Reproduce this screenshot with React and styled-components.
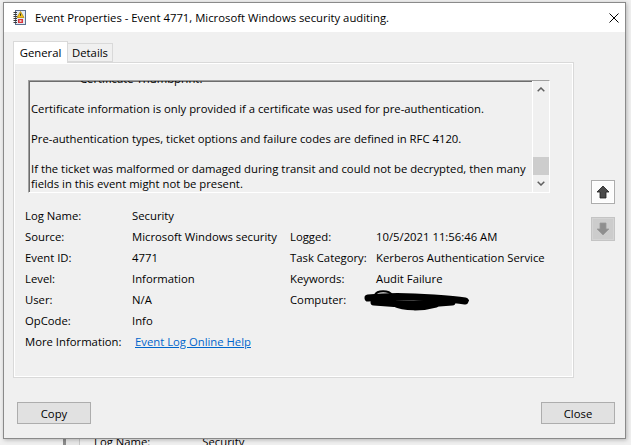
import React from 'react';
import styled, { createGlobalStyle } from 'styled-components';

const GlobalStyle = createGlobalStyle`
  html, body { margin: 0; padding: 0; }
  body {
    background: #f0f0f0;
    font-family: "Open Sans", "Noto Sans", sans-serif;
    font-size: 11.3px;
    color: #000;
    overflow: hidden;
  }
`;

const Desktop = styled.div`
  width: 631px;
  height: 445px;
  display: flex;
  flex-direction: column;
  overflow: hidden;
  background: #f0f0f0;
`;

const DialogRow = styled.div`
  display: flex;
  padding: 2px 0 0 3px;
`;

const Dialog = styled.div`
  width: 623px;
  height: 437px;
  box-sizing: border-box;
  border: 1px solid #8a8a8a;
  background: #f0f0f0;
  display: flex;
  flex-direction: column;
  box-shadow: 1px 1px 4px rgba(0, 0, 0, 0.25);
  position: relative;
  z-index: 1;
`;

const TitleBar = styled.div`
  height: 29px;
  flex: none;
  background: #fff;
  display: flex;
  align-items: center;
  padding: 0 6px 0 9px;
`;

const TitleText = styled.div`
  margin-left: 9px;
  flex: 1;
  white-space: nowrap;
`;

const Body = styled.div`
  flex: 1;
  display: flex;
  flex-direction: column;
  padding: 9px 10px 0 9px;
`;

const MainRow = styled.div`
  display: flex;
`;

const TabArea = styled.div`
  width: 561px;
  display: flex;
  flex-direction: column;
`;

const TabRow = styled.div`
  height: 21px;
  display: flex;
  align-items: flex-end;
`;

const Tab = styled.div`
  box-sizing: border-box;
  width: ${p => p.$width}px;
  height: ${p => (p.$active ? 22 : 19)}px;
  margin-bottom: ${p => (p.$active ? -1 : 0)}px;
  border: 1px solid #d9d9d9;
  border-bottom: ${p => (p.$active ? 'none' : '1px solid #d9d9d9')};
  border-left: ${p => (p.$first ? '1px solid #d9d9d9' : 'none')};
  background: ${p => (p.$active ? '#fff' : '#f0f0f0')};
  display: flex;
  align-items: center;
  justify-content: center;
  position: relative;
  z-index: ${p => (p.$active ? 2 : 1)};
  white-space: nowrap;
`;

const Panel = styled.div`
  box-sizing: border-box;
  height: 316px;
  border: 1px solid #d9d9d9;
  box-shadow: inset 0 0 0 1px #fff;
  padding: 17px 11px 0 11px;
  display: flex;
  flex-direction: column;
`;

const TextBox = styled.div`
  box-sizing: border-box;
  width: 522px;
  height: 113px;
  margin-left: 3px;
  border: 1px solid;
  border-color: #a0a0a0 #fff #fff #a0a0a0;
  box-shadow: inset 1px 1px 0 #6d6d6d;
  display: flex;
`;

const TextContent = styled.div`
  flex: 1;
  overflow: hidden;
  padding-left: 2px;
  line-height: 15px;
`;

const TextScroll = styled.div`
  margin-top: -10px;
`;

const Line = styled.div`
  height: 15px;
  white-space: nowrap;
  padding-left: ${p => p.$indent || 0}px;
`;

const ScrollBar = styled.div`
  width: 17px;
  box-sizing: border-box;
  border-left: 1px solid #fff;
  background: #f0f0f0;
  display: flex;
  flex-direction: column;
`;

const ScrollArrow = styled.div`
  height: 17px;
  display: flex;
  align-items: center;
  justify-content: center;
`;

const ScrollTrack = styled.div`
  flex: 1;
  display: flex;
  flex-direction: column;
  justify-content: flex-end;
`;

const Thumb = styled.div`
  height: 18px;
  background: #cdcdcd;
`;

const Details = styled.div`
  margin-top: 12px;
  display: grid;
  grid-template-columns: 107px 158px 86px auto;
  grid-auto-rows: 21px;
  align-items: center;
  white-space: nowrap;
`;

const Cell = styled.div`
  line-height: 21px;
`;

const HelpLink = styled.a`
  color: #0066cc;
  text-decoration: underline;
  padding-left: 3px;
  cursor: pointer;
`;

const Redacted = styled.svg`
  display: block;
  margin: -1px 0 0 -12px;
`;

const ArrowCol = styled.div`
  margin-left: 17px;
  padding-top: 139px;
  display: flex;
  flex-direction: column;
  gap: 13px;
`;

const MoveBtn = styled.div`
  box-sizing: border-box;
  width: 24px;
  height: 24px;
  border: 1px solid ${p => (p.$disabled ? '#c4c4c4' : '#adadad')};
  background: ${p => (p.$disabled ? '#cccccc' : '#fcfcfc')};
  box-shadow: inset 0 0 0 1px ${p => (p.$disabled ? '#d4d4d4' : '#fff')};
  display: flex;
  align-items: center;
  justify-content: center;
`;

const Footer = styled.div`
  margin-top: 24px;
  padding-left: 4px;
  display: flex;
  justify-content: space-between;
`;

const Button = styled.button`
  width: 74px;
  height: 22px;
  box-sizing: border-box;
  border: 1px solid #adadad;
  background: #e1e1e1;
  font: inherit;
  color: #000;
  padding: 0;
`;

const BehindStrip = styled.div`
  flex: 1;
  display: flex;
  overflow: hidden;
  background: #f0f0f0;
`;

const BehindBar = styled.div`
  margin-left: 63px;
  width: 13px;
  border-left: 3px solid #8c8c8c;
  border-right: 1px solid #c8c8c8;
  background: #e8e8e8;
`;

const BehindText = styled.div`
  margin-left: ${p => p.$gap}px;
  margin-top: -5px;
  line-height: 15px;
  white-space: nowrap;
`;

const EventIcon = () => (
  <svg width="13" height="15" viewBox="0 0 13 15">
    <rect x="2.5" y="0.5" width="10" height="14" fill="#e4eaf2" stroke="#5b6f8f" />
    {[2, 4, 6, 8, 10, 12].map(y => (
      <line key={y} x1="0.5" y1={y + 0.5} x2="4" y2={y + 0.5} stroke="#3a3a3a" />
    ))}
    <polygon points="7.5,1.5 11,7.5 4,7.5" fill="#f6c31a" stroke="#a88400" strokeWidth="0.7" />
    <line x1="7.5" y1="3.5" x2="7.5" y2="5.8" stroke="#222" strokeWidth="0.9" />
    <rect x="5" y="9" width="5" height="4" fill="#d8343b" />
    <rect x="6.5" y="10" width="2" height="2" fill="#f4c0c0" />
  </svg>
);

const CloseIcon = () => (
  <svg width="10" height="10" viewBox="0 0 10 10">
    <path d="M0.5 0.5 L9.5 9.5 M9.5 0.5 L0.5 9.5" stroke="#000" strokeWidth="1" />
  </svg>
);

const Chevron = ({ down }) => (
  <svg width="8" height="5" viewBox="0 0 8 5">
    <path d={down ? 'M0.7 0.7 L4 4 L7.3 0.7' : 'M0.7 4.3 L4 1 L7.3 4.3'} stroke="#606060" strokeWidth="1.5" fill="none" />
  </svg>
);

const BlockArrow = ({ down, disabled }) => (
  <svg width="14" height="14" viewBox="0 0 14 14">
    <path
      d={down ? 'M7 13 L13 7 H10 V1 H4 V7 H1 Z' : 'M7 1 L13 7 H10 V13 H4 V7 H1 Z'}
      fill={disabled ? '#8e8e8e' : '#4a4a4a'}
      stroke={disabled ? '#9a9a9a' : '#1e1e1e'}
      strokeWidth="0.8"
      strokeLinejoin="round"
    />
  </svg>
);

const Scribble = () => (
  <Redacted width="106" height="23" viewBox="0 0 106 23">
    <path d="M4 10 C 20 8, 45 8, 70 10 C 85 11, 95 12, 101 13" stroke="#000" strokeWidth="7" fill="none" strokeLinecap="round" />
    <path d="M10 14 C 30 16, 60 17, 88 14" stroke="#000" strokeWidth="7" fill="none" strokeLinecap="round" />
    <path d="M11 7 C 13 2, 25 2, 28 7" stroke="#000" strokeWidth="2.2" fill="none" />
    <path d="M30 16 C 40 21, 58 21, 72 17" stroke="#000" strokeWidth="5" fill="none" strokeLinecap="round" />
    <path d="M86 12 L 104 12.5" stroke="#000" strokeWidth="2" strokeLinecap="round" />
  </Redacted>
);

const rows = [
  ['Log Name:', 'Security', '', ''],
  ['Source:', 'Microsoft Windows security', 'Logged:', '10/5/2021 11:56:46 AM'],
  ['Event ID:', '4771', 'Task Category:', 'Kerberos Authentication Service'],
  ['Level:', 'Information', 'Keywords:', 'Audit Failure'],
  ['User:', 'N/A', 'Computer:', null],
  ['OpCode:', 'Info', '', ''],
];

export default function App() {
  return (
    <Desktop>
      <GlobalStyle />
      <DialogRow>
        <Dialog>
          <TitleBar>
            <EventIcon />
            <TitleText>Event Properties - Event 4771, Microsoft Windows security auditing.</TitleText>
            <CloseIcon />
          </TitleBar>
          <Body>
            <MainRow>
              <TabArea>
                <TabRow>
                  <Tab $active $first $width={55}>General</Tab>
                  <Tab $width={45}>Details</Tab>
                </TabRow>
                <Panel>
                  <TextBox>
                    <TextContent>
                      <TextScroll>
                        <Line $indent={49}>Certificate Thumbprint:</Line>
                        <Line />
                        <Line>Certificate information is only provided if a certificate was used for pre-authentication.</Line>
                        <Line />
                        <Line>Pre-authentication types, ticket options and failure codes are defined in RFC 4120.</Line>
                        <Line />
                        <Line>If the ticket was malformed or damaged during transit and could not be decrypted, then many</Line>
                        <Line>fields in this event might not be present.</Line>
                      </TextScroll>
                    </TextContent>
                    <ScrollBar>
                      <ScrollArrow><Chevron /></ScrollArrow>
                      <ScrollTrack><Thumb /></ScrollTrack>
                      <ScrollArrow><Chevron down /></ScrollArrow>
                    </ScrollBar>
                  </TextBox>
                  <Details>
                    {rows.map(([a, b, c, d]) => (
                      <React.Fragment key={a}>
                        <Cell>{a}</Cell>
                        <Cell>{b}</Cell>
                        <Cell>{c}</Cell>
                        <Cell>{d === null ? <Scribble /> : d}</Cell>
                      </React.Fragment>
                    ))}
                    <Cell>More Information:</Cell>
                    <Cell><HelpLink>Event Log Online Help</HelpLink></Cell>
                  </Details>
                </Panel>
              </TabArea>
              <ArrowCol>
                <MoveBtn><BlockArrow /></MoveBtn>
                <MoveBtn $disabled><BlockArrow down disabled /></MoveBtn>
              </ArrowCol>
            </MainRow>
            <Footer>
              <Button>Copy</Button>
              <Button>Close</Button>
            </Footer>
          </Body>
        </Dialog>
      </DialogRow>
      <BehindStrip>
        <BehindBar />
        <BehindText $gap={14}>Log Name:</BehindText>
        <BehindText $gap={52}>Security</BehindText>
      </BehindStrip>
    </Desktop>
  );
}
